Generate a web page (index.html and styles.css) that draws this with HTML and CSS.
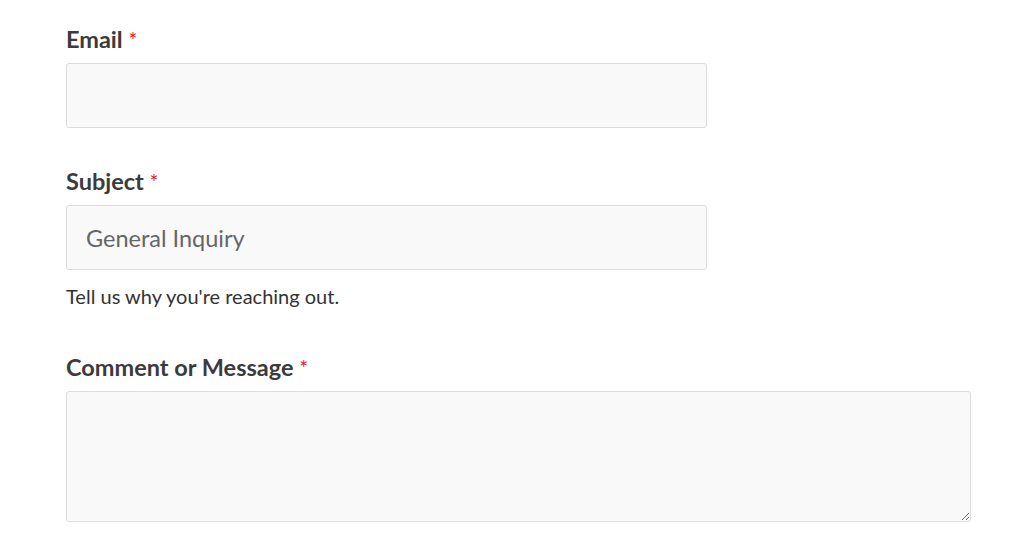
FILE: index.html
```html
<!DOCTYPE html>
<html lang="en">
<head>
<meta charset="utf-8">
<title>Contact form</title>
<link rel="stylesheet" href="styles.css">
</head>
<body>
<form class="form">
  <div class="field">
    <label class="label" for="email">Email <span class="req">*</span></label>
    <input class="input" id="email" type="email">
  </div>
  <div class="field">
    <label class="label" for="subject">Subject <span class="req">*</span></label>
    <input class="input" id="subject" type="text" value="General Inquiry">
    <p class="help">Tell us why you're reaching out.</p>
  </div>
  <div class="field field-message">
    <label class="label" for="msg">Comment or Message <span class="req">*</span></label>
    <textarea class="textarea" id="msg"></textarea>
  </div>
</form>
</body>
</html>
```
FILE: styles.css
```css
html, body {
  margin: 0;
  padding: 0;
  background: #ffffff;
}
body {
  font-family: Lato, "Open Sans", sans-serif;
  color: #3a3a3a;
}
.form {
  display: flex;
  flex-direction: column;
  gap: 39px;
  padding: 25px 0 0 66px;
}
.field {
  display: flex;
  flex-direction: column;
  align-items: flex-start;
}
.field-message {
  margin-top: 3px;
}
.label {
  display: block;
  font-size: 23.5px;
  line-height: 28px;
  font-weight: 700;
  color: #3b3b3b;
  margin-bottom: 9px;
}
.req {
  color: #e2231a;
  font-weight: 400;
  font-size: 21px;
}
.input, .textarea {
  box-sizing: border-box;
  font-family: Lato, "Open Sans", sans-serif;
  font-size: 23.5px;
  color: #666666;
  background: #f9f9f9;
  border: 1px solid #dcdcdc;
  border-radius: 3px;
  outline: none;
  margin: 0;
}
.input {
  width: 641px;
  height: 65px;
  padding: 0 19px;
}
.textarea {
  width: 905px;
  height: 131px;
  padding: 12px 19px;
}
.help {
  margin: 11px 0 0 0;
  font-size: 20px;
  line-height: 30px;
  color: #333333;
}
```
